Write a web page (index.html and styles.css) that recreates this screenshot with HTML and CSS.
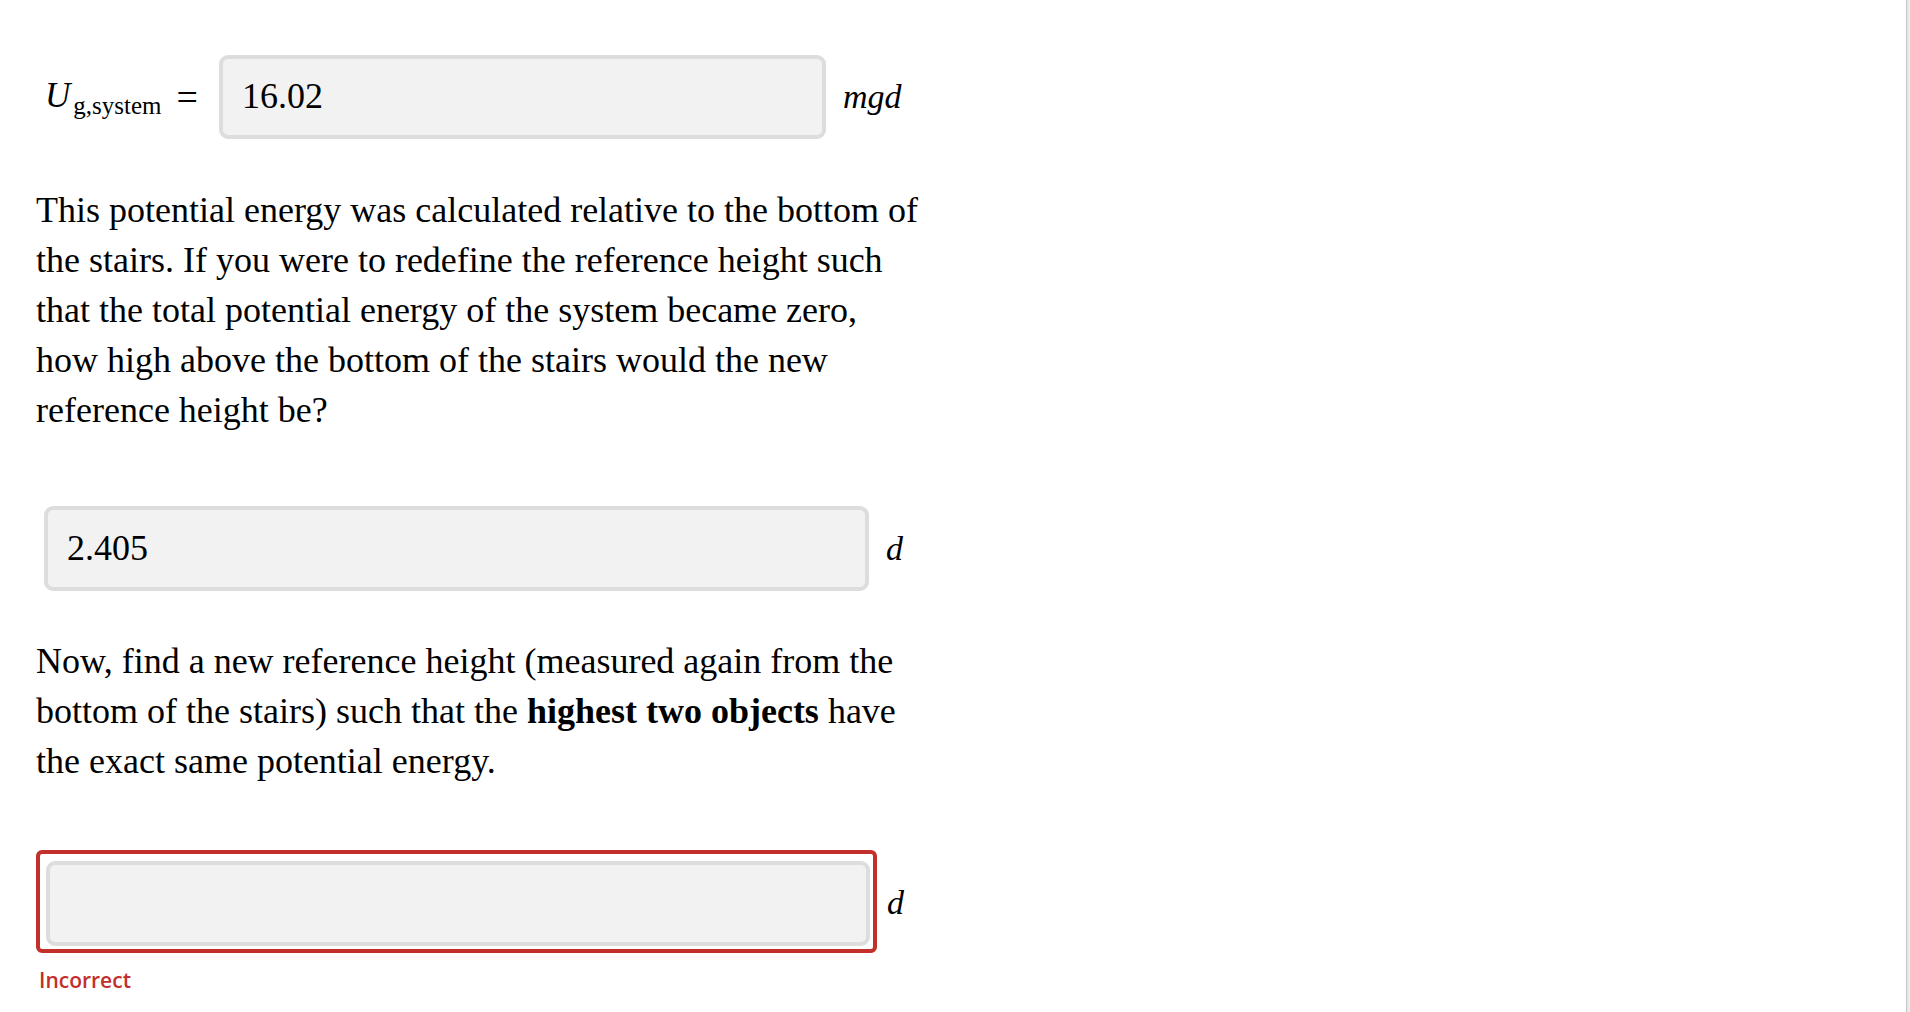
FILE: index.html
```html
<!DOCTYPE html>
<html lang="en">
<head>
<meta charset="utf-8">
<title>Potential energy question</title>
<link rel="stylesheet" href="styles.css">
</head>
<body>
<div class="page">
  <main class="content">
    <div class="row row-first">
      <span class="math label"><span class="var">U</span><sub class="sub">g,system</sub></span>
      <span class="math eq">=</span>
      <div class="field field-first">16.02</div>
      <span class="math unit unit-first">mgd</span>
    </div>

    <p class="para para-first">This potential energy was calculated relative to the bottom of the stairs. If you were to redefine the reference height such that the total potential energy of the system became zero, how high above the bottom of the stairs would the new reference height be?</p>

    <div class="row row-second">
      <div class="field field-wide">2.405</div>
      <span class="math unit">d</span>
    </div>

    <p class="para para-second">Now, find a new reference height (measured again from the bottom of the stairs) such that the <strong>highest two objects</strong> have the exact same potential energy.</p>

    <div class="row row-third">
      <div class="error-wrap">
        <div class="field field-empty"></div>
      </div>
      <span class="math unit unit-third">d</span>
    </div>
    <div class="feedback">Incorrect</div>
  </main>
  <div class="edge"></div>
</div>
</body>
</html>
```
FILE: styles.css
```css
html, body {
  margin: 0;
  padding: 0;
  background: #ffffff;
}

.page {
  display: flex;
  min-height: 100vh;
}

.content {
  flex: 1;
  padding: 55px 0 0 36px;
  font-family: "Liberation Serif", "Times New Roman", serif;
  color: #000;
}

.edge {
  width: 4px;
  background: linear-gradient(to right, #c9c9c9 0, #c9c9c9 1px, #e2e2e2 1px, #efefef 100%);
}

.row {
  display: flex;
  align-items: center;
}

.math {
  font-family: "Liberation Serif", "Times New Roman", serif;
  font-size: 34px;
  line-height: 1;
}

.label {
  margin-left: 9px;
  display: inline-flex;
  align-items: baseline;
  position: relative;
  top: -2px;
}

.var {
  font-style: italic;
  font-size: 35px;
}

.sub {
  font-size: 25px;
  vertical-align: baseline;
  position: relative;
  top: 7px;
  margin-left: 3px;
  font-style: normal;
}

.eq {
  margin-left: 15px;
  margin-right: 21px;
  font-size: 38px;
}

.unit {
  font-style: italic;
  margin-left: 17px;
}

.unit-first {
  margin-left: 17px;
}

.field {
  box-sizing: border-box;
  height: 84px;
  background: #f2f2f2;
  border: 4px solid #dddddd;
  border-radius: 9px;
  font-family: "Liberation Serif", "Times New Roman", serif;
  font-size: 36px;
  display: flex;
  align-items: center;
  padding: 0 19px;
  padding-bottom: 2px;
}

.field-first {
  width: 607px;
}

.field-wide {
  width: 825px;
  margin-left: 8px;
  height: 85px;
  padding-left: 19px;
}

.para {
  margin: 0;
  width: 884px;
  font-size: 36px;
  line-height: 50px;
}

.para-first {
  margin-top: 46px;
}

.row-second {
  margin-top: 71px;
}

.para-second {
  margin-top: 45px;
}

.para-second strong {
  font-weight: bold;
}

.row-third {
  margin-top: 64px;
}

.error-wrap {
  box-sizing: border-box;
  width: 841px;
  border: 4px solid #c3302c;
  border-radius: 6px;
  padding: 7px 3px 3px 6px;
}

.field-empty {
  width: 100%;
  height: 85px;
}

.unit-third {
  margin-left: 10px;
  position: relative;
  top: 1px;
}

.feedback {
  margin-top: 13px;
  margin-left: 3px;
  font-family: "Open Sans", "Noto Sans", sans-serif;
  font-weight: 600;
  font-size: 21px;
  color: #c3302c;
}
```
